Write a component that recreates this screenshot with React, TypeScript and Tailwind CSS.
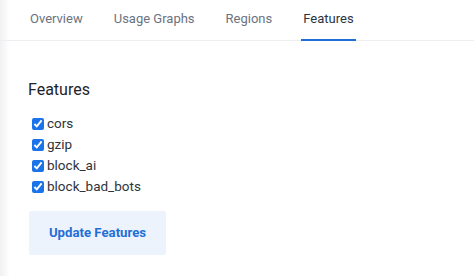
const tabs = ['Overview', 'Usage Graphs', 'Regions', 'Features'];
const features = ['cors', 'gzip', 'block_ai', 'block_bad_bots'];

export default function App() {
  return (
    <div className="relative w-[474px] h-[276px] bg-white overflow-hidden font-['Roboto',sans-serif]">
      {/* faint shadow on left edge */}
      <div className="absolute left-0 top-0 h-full w-[10px] bg-gradient-to-r from-[#f1f1f3] to-white" />

      {/* Tabs */}
      <div className="relative flex h-[41px] border-b border-[#eceef1] pl-[14.5px]">
        {tabs.map(tab => {
          const active = tab === 'Features';
          return (
            <div
              key={tab}
              className={`relative flex items-center px-[15.5px] pb-[2px] text-[13px] ${
                active ? 'text-[#2b3442]' : 'text-[#6b7280]'
              }`}
            >
              {tab}
              {active && (
                <span className="absolute left-[13.5px] right-[13.5px] bottom-[-1px] h-[2px] bg-[#1f6fd6]" />
              )}
            </div>
          );
        })}
      </div>

      {/* Content */}
      <div className="relative pl-[28px] pt-[39px]">
        <h2 className="text-[16px] leading-[20px] text-[#1f2328]">Features</h2>
        <div className="mt-[14px] flex flex-col gap-[2px]">
          {features.map(f => (
            <label key={f} className="flex items-center h-[19px] text-[13.5px] text-[#2f343b]">
              <input
                type="checkbox"
                defaultChecked
                className="ml-[4px] mr-[3px] h-[12px] w-[12px] accent-[#1a73e8]"
              />
              {f}
            </label>
          ))}
        </div>
        <button className="mt-[15px] ml-[1px] flex h-[44px] w-[137px] items-center justify-center rounded-[2px] bg-[#edf3fd] text-[13.2px] font-bold text-[#1f6fd6]">
          Update Features
        </button>
      </div>
    </div>
  );
}
